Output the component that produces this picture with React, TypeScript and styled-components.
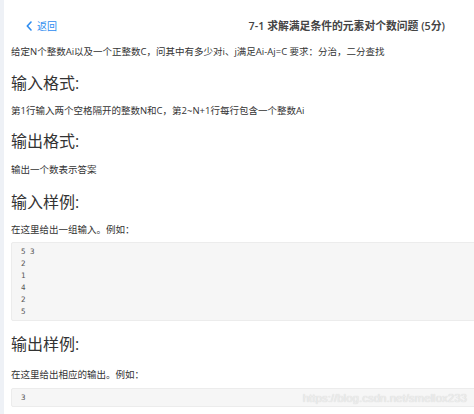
import React from "react";
import styled, { createGlobalStyle } from "styled-components";

const Global = createGlobalStyle`
  html, body { margin: 0; padding: 0; background: #ffffff; }
  body {
    font-family: "Open Sans", "Noto Sans CJK SC", sans-serif;
    color: #333;
  }
`;

const Page = styled.div`
  width: 474px;
  height: 414px;
  overflow: hidden;
  box-sizing: border-box;
  border-left: 4px solid #eef1f6;
  padding-left: 7px;
  display: flex;
  flex-direction: column;
  position: relative;
`;

const Header = styled.div`
  display: flex;
  align-items: center;
  justify-content: space-between;
  padding: 18px 29px 0 15px;
  height: 16px;
  line-height: 16px;
`;

const Back = styled.a`
  display: flex;
  align-items: center;
  gap: 5px;
  color: #2d8cf0;
  font-size: 10px;
  text-decoration: none;
`;

const Title = styled.div`
  font-size: 10.8px;
  font-weight: 600;
  color: #444;
`;

const Para = styled.p<{ $top: number }>`
  margin: ${(p) => p.$top}px 0 0 0;
  font-size: 9.5px;
  line-height: 14px;
  color: #333;
  white-space: nowrap;
`;

const Heading = styled.h3<{ $top: number }>`
  margin: ${(p) => p.$top}px 0 0 0;
  font-size: 16px;
  font-weight: 400;
  line-height: 22px;
  color: #333;
`;

const Code = styled.pre<{ $top: number }>`
  margin: ${(p) => p.$top}px -2px 0 0;
  padding: 3px 9px 2px;
  background: #f6f6f6;
  border: 1px solid #ececec;
  border-radius: 2px;
  font-family: "DejaVu Sans Mono", monospace;
  font-size: 7.5px;
  line-height: 12px;
  color: #555;
  position: relative;
`;

const Watermark = styled.span`
  position: absolute;
  right: 8px;
  top: 3px;
  font-family: "Liberation Sans", sans-serif;
  font-size: 11.5px;
  line-height: 12px;
  color: #eeeeee;
  text-shadow: 0 0 1px #c8c8c8;
`;

export default function App() {
  return (
    <>
      <Global />
      <Page>
        <Header>
          <Back href="#">
            <svg width="6" height="10" viewBox="0 0 6 10">
              <path d="M5 1 L1.3 5 L5 9" fill="none" stroke="#2d8cf0" strokeWidth="1.6" strokeLinecap="round" strokeLinejoin="round" />
            </svg>
            返回
          </Back>
          <Title>7-1 求解满足条件的元素对个数问题 (5分)</Title>
        </Header>
        <Para $top={11}>给定N个整数Ai以及一个正整数C，问其中有多少对i、j满足Ai-Aj=C 要求：分治，二分查找</Para>
        <Heading $top={13}>输入格式:</Heading>
        <Para $top={10}>第1行输入两个空格隔开的整数N和C，第2~N+1行每行包含一个整数Ai</Para>
        <Heading $top={12}>输出格式:</Heading>
        <Para $top={11}>输出一个数表示答案</Para>
        <Heading $top={14}>输入样例:</Heading>
        <Para $top={10}>在这里给出一组输入。例如：</Para>
        <Code $top={5}>{"5 3\n2\n1\n4\n2\n5"}</Code>
        <Heading $top={12}>输出样例:</Heading>
        <Para $top={13}>在这里给出相应的输出。例如：</Para>
        <Code $top={6}>
          3
          <Watermark>https://blog.csdn.net/smellox233</Watermark>
        </Code>
      </Page>
    </>
  );
}
